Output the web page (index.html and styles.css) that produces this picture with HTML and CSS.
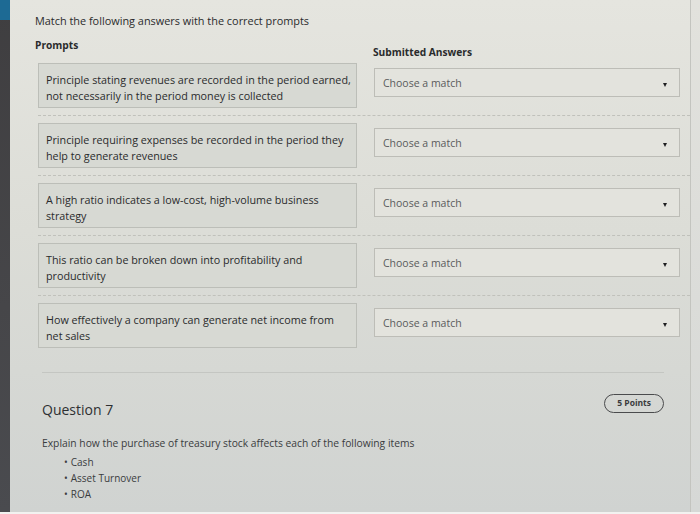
FILE: index.html
```html
<!DOCTYPE html>
<html>
<head>
<meta charset="utf-8">
<link rel="stylesheet" href="styles.css">
</head>
<body>
<div class="screen">
  <div class="strip"><div class="strip-mark"></div></div>
  <div class="panel">
    <p class="instructions">Match the following answers with the correct prompts</p>
    <div class="head-row">
      <div class="col-title">Prompts</div>
      <div class="col-title answers">Submitted Answers</div>
    </div>
    <div class="items">
      <div class="item">
        <div class="prompt">Principle stating revenues are recorded in the period earned,<br>not necessarily in the period money is collected</div>
        <div class="select"><span>Choose a match</span><span class="caret"></span></div>
      </div>
      <div class="item">
        <div class="prompt">Principle requiring expenses be recorded in the period they<br>help to generate revenues</div>
        <div class="select"><span>Choose a match</span><span class="caret"></span></div>
      </div>
      <div class="item">
        <div class="prompt">A high ratio indicates a low-cost, high-volume business<br>strategy</div>
        <div class="select"><span>Choose a match</span><span class="caret"></span></div>
      </div>
      <div class="item">
        <div class="prompt">This ratio can be broken down into profitability and<br>productivity</div>
        <div class="select"><span>Choose a match</span><span class="caret"></span></div>
      </div>
      <div class="item last">
        <div class="prompt">How effectively a company can generate net income from<br>net sales</div>
        <div class="select"><span>Choose a match</span><span class="caret"></span></div>
      </div>
    </div>
    <div class="question">
      <div class="q-head">
        <h2 class="q-title">Question 7</h2>
        <span class="points">5 Points</span>
      </div>
      <p class="q-text">Explain how the purchase of treasury stock affects each of the following items</p>
      <ul class="q-list">
        <li>Cash</li>
        <li>Asset Turnover</li>
        <li>ROA</li>
      </ul>
    </div>
  </div>
  <div class="edge"></div>
</div>
</body>
</html>
```
FILE: styles.css
```css
html, body {
  margin: 0;
  padding: 0;
  width: 700px;
  height: 514px;
  overflow: hidden;
  font-family: "Open Sans", "DejaVu Sans", sans-serif;
  color: #2a2b2c;
}

.screen {
  display: flex;
  width: 700px;
  height: 512px;
  border-bottom: 2px solid #f2f2f0;
  background: linear-gradient(180deg, #e5e5df 0%, #dcddd7 45%, #d0d3d1 100%);
}

.strip {
  width: 10px;
  flex: none;
  background: linear-gradient(180deg, #3f3e40 0%, #464649 60%, #4a4b4f 100%);
}

.strip-mark {
  height: 20px;
  background: #1d6a94;
}

.panel {
  flex: 1;
  padding: 14px 0 0 25px;
  border-right: 1px solid #c3c4bf;
}

.edge {
  width: 9px;
  flex: none;
  background: linear-gradient(180deg, #e2e2dd 0%, #d6d8d6 100%);
}

.instructions {
  margin: 0;
  font-size: 10.9px;
  line-height: 14px;
}

.head-row {
  display: grid;
  grid-template-columns: 321px 306px;
  column-gap: 17px;
  align-items: start;
  margin-top: 10px;
  height: 25px;
}

.col-title {
  font-weight: 700;
  font-size: 10.2px;
  line-height: 14px;
}

.answers {
  margin-top: 7px;
}

.items {
  padding-left: 3px;
}

.item {
  display: grid;
  grid-template-columns: 319px 306px;
  column-gap: 17px;
  align-items: start;
  padding-bottom: 7px;
  margin-bottom: 7px;
  border-bottom: 1px dashed #c0c1bb;
}

.item.last {
  border-bottom: none;
  padding-bottom: 0;
  margin-bottom: 0;
}

.prompt {
  box-sizing: border-box;
  height: 45px;
  padding: 8px 2px 0 7px;
  background: #d7d9d3;
  border: 1px solid #bcbeb8;
  font-size: 10.75px;
  line-height: 16px;
  white-space: nowrap;
}

.select {
  box-sizing: border-box;
  height: 29px;
  margin-top: 5px;
  padding: 0 12px 0 8px;
  display: flex;
  align-items: center;
  justify-content: space-between;
  background: #e3e3dd;
  border: 1px solid #bdbdb7;
  font-size: 10.5px;
  color: #5a5b5c;
}

.caret {
  width: 0;
  height: 0;
  margin-top: 4px;
  border-left: 2.5px solid transparent;
  border-right: 2.5px solid transparent;
  border-top: 4px solid #1f1f20;
}

.question {
  margin: 24px 26px 0 7px;
  border-top: 1px solid #c4c6c2;
}

.q-head {
  display: flex;
  justify-content: space-between;
  align-items: flex-start;
  padding-top: 21px;
}

.q-title {
  margin: 8px 0 0 0;
  font-size: 14px;
  font-weight: 400;
  line-height: 16px;
  color: #2e3032;
}

.points {
  box-sizing: border-box;
  height: 19px;
  padding: 0 12px;
  border: 1.5px solid #4a4b4d;
  border-radius: 10px;
  font-size: 8.5px;
  font-weight: 700;
  line-height: 16px;
  color: #3a3b3d;
}

.q-text {
  margin: 18px 0 0 0;
  font-size: 10.3px;
  line-height: 14px;
  color: #3a3c3e;
}

.q-list {
  list-style: none;
  margin: 4px 0 0 0;
  padding: 0 0 0 28px;
  font-size: 10px;
  line-height: 16px;
  color: #3a3c3e;
}

.q-list li::before {
  content: "\2022";
  margin-right: 3px;
  margin-left: -6px;
}
```
